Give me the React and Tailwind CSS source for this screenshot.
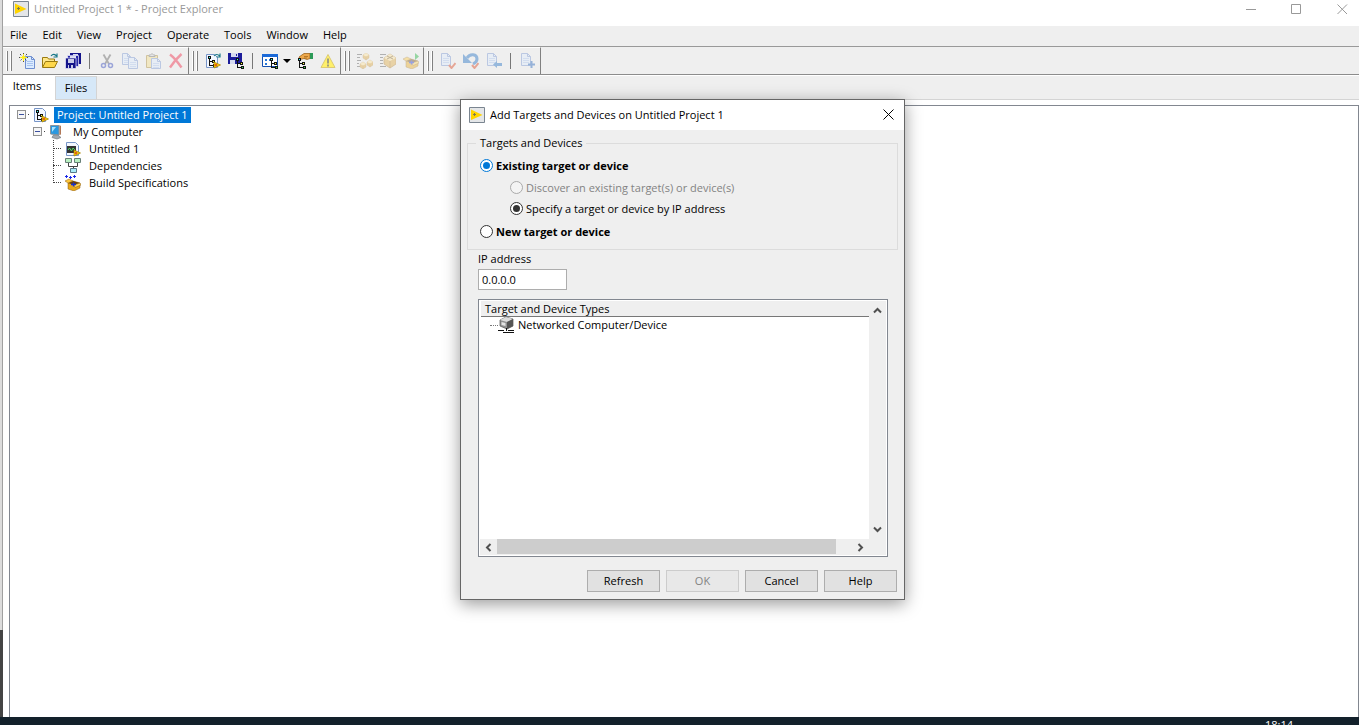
import { useState } from "react";

const menus = ["File", "Edit", "View", "Project", "Operate", "Tools", "Window", "Help"];

function Svg({ children, faded }) {
  return (
    <svg viewBox="0 0 16 16" className={`size-4 shrink-0 ${faded ? "opacity-40" : ""}`} fill="none" aria-hidden="true">
      {children}
    </svg>
  );
}

// shared icon parts
function Page({ x = 3, y = 2, w = 10, h = 13 }) {
  return (
    <g>
      <path d={`M${x + 0.5} ${y + 0.5}h${w - 4}l3 3v${h - 4}h-${w - 1}z`} fill="#dcecff" stroke="#6f8fd0" />
      <path d={`M${x + w - 3.5} ${y + 0.5}v3h3`} stroke="#6f8fd0" />
      <path d={`M${x + 2} ${y + 5.5}h${w - 4}M${x + 2} ${y + 7.5}h${w - 4}M${x + 2} ${y + 9.5}h${w - 4}`} stroke="#a9c4f0" />
    </g>
  );
}

function Nodes({ x = 0, y = 0 }) {
  return (
    <g transform={`translate(${x} ${y})`} shapeRendering="crispEdges">
      <path d="M0 0h3v3H0zM1 3h1v7H1zM2 5h2v1H2zM2 9h3v1H2zM4 4h3v3H4zM5 8h3v3H5z" fill="#111" />
      <path d="M1 1h1v1H1z" fill="#39f8e8" />
      <path d="M5 5h1v1H5z" fill="#ffff40" />
      <path d="M6 9h1v1H6z" fill="#35e050" />
    </g>
  );
}

function Arrow() {
  return (
    <g>
      <path d="M9 9l6.5 3L9 15z" fill="#ffe600" stroke="#a07800" strokeWidth="0.7" />
      <path d="M9.5 12h3M11 10.5v3" stroke="#d02020" strokeWidth="0.8" />
    </g>
  );
}

function Cube({ x, y, s = 1 }) {
  return (
    <g transform={`translate(${x} ${y}) scale(${s})`}>
      <path d="M0 2l3-2 3 2v3L3 7 0 5z" fill="#e0a83c" stroke="#a8741c" strokeWidth="0.4" />
      <path d="M0 2l3 1.5L6 2 3 0z" fill="#ffe39a" />
      <path d="M3 3.5V7" stroke="#a8741c" strokeWidth="0.4" />
    </g>
  );
}

function Box() {
  return (
    <g>
      <path d="M3 8l5-2 7 2v5l-6 3-6-2z" fill="#e8a818" stroke="#8a5a10" strokeWidth="0.5" />
      <path d="M3 8l5-2 7 2-6 2z" fill="#6a4208" />
      <path d="M0 6l4-2 4 2-5 2z" fill="#ffc838" stroke="#8a5a10" strokeWidth="0.5" />
      <path d="M9 10l6-2 1 2-6 2.5z" fill="#ffd75a" stroke="#8a5a10" strokeWidth="0.5" />
      <path d="M6 9.5h5M8.5 7.5v4" stroke="#1830d0" strokeWidth="1.4" />
    </g>
  );
}

function LabViewIcon() {
  return (
    <svg viewBox="0 0 16 16" className="size-4 shrink-0" aria-hidden="true">
      <path d="M.5.5h15v15H.5z" fill="#e4e6e8" stroke="#7a8590" />
      <path d="M2 2.5L13.500 8 2 13z" fill="#ffd500" />
      <path d="M4 7.5h3M5.5 6v3" stroke="#7d7a50" />
    </svg>
  );
}

function NewIcon() {
  return (
    <Svg>
      <Page x={6} y={3} w={10} h={13} />
      <path d="M4.5 0v9M0 4.5h9M1 1l7 7M8 1L1 8" stroke="#222" strokeWidth="0.8" strokeDasharray="1.5 1" />
      <path d="M3 3h3v3H3zM4 1h1v2H4zM4 6h1v2H4zM1 4h2v1H1zM6 4h2v1H6z" fill="#ffee20" />
    </Svg>
  );
}

function OpenIcon() {
  return (
    <Svg>
      <path d="M.5 14V4.5h5l1 1.500h6v3" fill="#ffe88a" stroke="#9a7a10" />
      <path d="M.5 14.5l3-6h12l-3 6z" fill="#ffd84c" stroke="#9a7a10" />
      <path d="M9 3c2-2.500 4-2 5.500 0M15 .5V4h-3.500" stroke="#187888" strokeWidth="1.2" />
    </Svg>
  );
}

function SaveAllIcon() {
  return (
    <Svg>
      <path d="M5 0h11v11H5z" fill="#14148a" />
      <path d="M8 1h5v3H8z" fill="#d8dcf0" />
      <path d="M2.500 2.500h11v11h-11z" fill="#2626a8" stroke="#eef" strokeWidth="0.7" />
      <path d="M5 3h6v3H5z" fill="#d8dcf0" />
      <path d="M.5 5H11v10.500H.5z" fill="#14148a" stroke="#eef" strokeWidth="0.7" />
      <path d="M3 6h6v4H3zM3 12h5v3H3z" fill="#c9cce8" />
      <path d="M4 12h2v3H4z" fill="#14148a" />
    </Svg>
  );
}

function CutIcon() {
  return (
    <Svg faded>
      <path d="M4.5 1.5L10 11M11.5 1.5L6 11" stroke="#555" strokeWidth="1.8" />
      <circle cx="4.5" cy="12.5" r="2" stroke="#2038b8" strokeWidth="1.5" />
      <circle cx="11.5" cy="12.5" r="2" stroke="#2038b8" strokeWidth="1.5" />
    </Svg>
  );
}

function CopyIcon() {
  return (
    <Svg faded>
      <Page x={0} y={0} w={9} h={12} />
      <Page x={6} y={4} w={10} h={12} />
    </Svg>
  );
}

function PasteIcon() {
  return (
    <Svg faded>
      <path d="M1.5 2.5h11v12h-11z" fill="#f5dc80" stroke="#a58428" />
      <path d="M4 3.5V2h1.5L7 .5 8.5 2H10v1.5z" fill="#ddd" stroke="#666" />
      <Page x={6} y={5} w={10} h={11} />
    </Svg>
  );
}

function DeleteIcon() {
  return (
    <Svg faded>
      <path d="M2 1.5c4 3 8 8 11.500 13M13.500 1C9 5 5 10 2 14.500" stroke="#f01838" strokeWidth="2.4" />
    </Svg>
  );
}

function ProjectIcon({ swoosh }) {
  return (
    <Svg>
      <path d="M1.5 1.5h8l3 3v10h-11z" fill="#f3f7ff" stroke="#7896c8" />
      <Nodes x={3} y={3} />
      <Arrow />
      {swoosh && <path d="M9 3c1.500-2 4-2 5.500 0M15 .5V4h-3.500" stroke="#187888" strokeWidth="1.2" />}
    </Svg>
  );
}

function SaveProjectIcon() {
  return (
    <Svg>
      <path d="M0 0h14v11H0z" fill="#1c1c9a" />
      <path d="M3 0h7v4H3zM2 7h5v4H2z" fill="#d6daf0" />
      <path d="M8 1h1v2H8z" fill="#1c1c9a" />
      <Nodes x={8} y={5} />
    </Svg>
  );
}

function ViewIcon() {
  return (
    <Svg>
      <path d="M.5 1.5h15v12H.5z" fill="#fff" stroke="#1450b0" />
      <path d="M0 1h16v3H0z" fill="#1c6ad8" />
      <path d="M3 6h2v2H3zM7 6h2v2H7zM3 10h2v2H3z" fill="#2878d8" />
      <Nodes x={8} y={5} />
    </Svg>
  );
}

function PropertiesIcon() {
  return (
    <Svg>
      <path d="M2 4l5-3.500h6v5l-3 1-3-1-4 1z" fill="#eda84c" stroke="#94580c" strokeWidth="0.7" />
      <path d="M7 3.500h4M7 5h3" stroke="#94580c" strokeWidth="0.6" />
      <path d="M13 0h3v6h-3z" fill="#2c9a58" />
      <Nodes x={1} y={5} />
    </Svg>
  );
}

function WarningIcon() {
  return (
    <Svg>
      <path d="M8 1.5l7 13H1z" fill="#fff06a" stroke="#dccb74" strokeLinejoin="round" />
      <path d="M8 5.5v5M8 11.5v2" stroke="#8a8a86" strokeWidth="1.6" />
    </Svg>
  );
}

function CubesIcon() {
  return (
    <Svg faded>
      <path d="M0 1.5h5M0 4.5h3M0 7.5h4M0 10.5h2M0 13.5h3" stroke="#555" />
      <Cube x={6} y={0} />
      <Cube x={3} y={9} />
      <Cube x={10} y={7} />
    </Svg>
  );
}

function BigCubeIcon() {
  return (
    <Svg faded>
      <path d="M0 1.5h6M0 4.5h3M0 7.5h3M0 10.5h3M0 13.5h6" stroke="#555" />
      <Cube x={4} y={1} s={2} />
      <path d="M7 3l6 3M13 3L7 6" stroke="#7a5818" />
    </Svg>
  );
}

function BuildIcon() {
  return (
    <Svg faded>
      <Box />
      <path d="M12 0l4 3.500L12 7z" fill="#10b030" />
    </Svg>
  );
}

function CheckPageIcon() {
  return (
    <Svg faded>
      <Page x={1} y={0} w={10} h={13} />
      <path d="M9 12l2.500 3L15.500 10" stroke="#d83810" strokeWidth="2" />
    </Svg>
  );
}

function UndoIcon() {
  return (
    <Svg faded>
      <path d="M4 5c3-5 10-4 10 1 0 3-2 4-4 5" stroke="#1468c0" strokeWidth="3" />
      <path d="M0 1v9h9z" fill="#1468c0" />
      <path d="M9 12l2.500 3L15.500 10" stroke="#d83810" strokeWidth="2" />
    </Svg>
  );
}

function PageBackIcon() {
  return (
    <Svg faded>
      <Page x={1} y={0} w={10} h={13} />
      <path d="M7 11.5L11 8v2h5v3h-5v2z" fill="#1468c0" />
    </Svg>
  );
}

function PageAddIcon() {
  return (
    <Svg faded>
      <Page x={1} y={0} w={10} h={13} />
      <path d="M8 11.5h7M11.5 8v7" stroke="#1458b8" strokeWidth="2" />
    </Svg>
  );
}

function ComputerIcon() {
  return (
    <Svg>
      <path d="M1.500 1.500h8.500v9.500l-8.500-1z" fill="#2a98e0" stroke="#8a949c" />
      <path d="M3 3h4L3 8z" fill="#a8e4ff" />
      <path d="M10.500 1L12 2v8.500l-1.500.5z" fill="#b07858" />
      <path d="M4 11.500l5-.5 3 2.500-4 1.500-5-1.500z" fill="#a0a8b0" stroke="#687078" strokeWidth="0.6" />
    </Svg>
  );
}

function ViIcon() {
  return (
    <Svg>
      <path d="M1.5 1.500h9l3 3v10h-12z" fill="#f3f7ff" stroke="#7896c8" />
      <path d="M2 5h9v7H2z" fill="#333" />
      <path d="M3 9l1.500-2 2 3 1.500-3 2 2" stroke="#50d860" />
      <Arrow />
    </Svg>
  );
}

function DependenciesIcon() {
  return (
    <Svg>
      <path d="M3.5 5v3.500h9V5M8.5 8v3" stroke="#444" />
      <path d="M.5.5h6v4h-6zM9.500.5h6v4h-6z" fill="#b8f0c0" stroke="#688078" />
      <path d="M5.5 10.5h6v4h-6z" fill="#a8ecf8" stroke="#587888" />
    </Svg>
  );
}

function BuildSpecIcon() {
  return (
    <Svg>
      <Box />
      <path d="M0 1.500h3M4 2.500h3M8 1.500h3M1.5 0v3M5.5 1v3M9.500 0v3" stroke="#1828e8" />
    </Svg>
  );
}

function NetworkIcon() {
  return (
    <Svg>
      <path d="M2 3l6-3 7 2v7l-6 3-7-3z" fill="#909090" stroke="#555" strokeWidth="0.7" />
      <path d="M2 3l7 2 6-3-7-2z" fill="#ddd" />
      <path d="M9 5l6-3v7l-6 3z" fill="#555" />
      <path d="M3.500 5l4 1v3l-4-1z" fill="#e4e4e4" />
      <path d="M8.500 11v3M0 13.500h6M10 13.500h6M5 15.500h11" stroke="#111" />
    </Svg>
  );
}

const toolbars = [
  [
    ["New", NewIcon], ["Open", OpenIcon], ["Save All", SaveAllIcon], "sep",
    ["Cut", CutIcon], ["Copy", CopyIcon], ["Paste", PasteIcon], ["Delete", DeleteIcon],
  ],
  [
    ["Open Project", () => <ProjectIcon swoosh />], ["Save Project", SaveProjectIcon], "sep",
    ["Show", ViewIcon], "drop", ["Properties", PropertiesIcon], ["Conflicts", WarningIcon],
  ],
  [["Build", CubesIcon], ["Build All", BigCubeIcon], ["Deploy", BuildIcon]],
  [
    ["Check", CheckPageIcon], ["Undo Check", UndoIcon], ["Get Latest", PageBackIcon], "sep",
    ["Add File", PageAddIcon],
  ],
];

function ToolItem({ item }) {
  if (item === "sep") {
    return (
      <span className="flex w-[11px] justify-center">
        <span className="h-4 w-px bg-[#777]" />
      </span>
    );
  }
  if (item === "drop") {
    return (
      <button aria-label="Show options" className="flex w-3 items-center justify-center">
        <svg viewBox="0 0 8 4" className="h-1 w-2"><path d="M0 0h8L4 4z" /></svg>
      </button>
    );
  }
  const [label, Icon] = item;
  return (
    <button aria-label={label} className="flex h-[23px] w-[23px] items-center justify-center">
      <Icon />
    </button>
  );
}

function Toolbar() {
  return (
    <div className="flex h-7 border-b border-[#8c8c8c] bg-[#efefef]">
      {toolbars.map((items, i) => (
        <div key={i} className="flex items-center border-t border-r border-t-white border-r-[#808080] pr-px">
          <span className="flex w-3 justify-center gap-0.5">
            <span className="h-5 w-0.5 border-r border-[#808080] bg-white" />
            <span className="h-5 w-0.5 border-r border-[#808080] bg-white" />
          </span>
          {items.map((item, j) => <ToolItem key={j} item={item} />)}
        </div>
      ))}
    </div>
  );
}

function Expander() {
  return (
    <button aria-label="Collapse" className="flex size-[9px] shrink-0 items-center justify-center border border-[#919191] bg-[#f6f6f6]">
      <span className="h-px w-[5px] bg-[#3c50a0]" />
    </button>
  );
}

function Leaf({ icon, children }) {
  return (
    <li className="flex h-[17px] items-center">
      <span className="mr-1 w-2 border-t border-dotted border-[#444]" />
      {icon}
      <span className="ml-2">{children}</span>
    </li>
  );
}

function ProjectTree() {
  return (
    <ul className="pl-[7px]">
      <li>
        <div className="flex h-[17px] items-center">
          <Expander />
          <span className="mr-1 ml-0.5 w-px border-t border-dotted border-[#444]" />
          <ProjectIcon />
          <span className="ml-[5px] bg-[#0078d7] px-[3px] leading-[16px] text-white">Project: Untitled Project 1</span>
        </div>
        <ul className="pl-4">
          <li>
            <div className="flex h-[17px] items-center">
              <Expander />
              <span className="mr-1 ml-0.5 w-px border-t border-dotted border-[#444]" />
              <ComputerIcon />
              <span className="ml-2">My Computer</span>
            </div>
            <ul className="relative pl-5 before:absolute before:top-0 before:bottom-2 before:left-5 before:border-l before:border-dotted before:border-[#444]">
              <Leaf icon={<ViIcon />}>Untitled 1</Leaf>
              <Leaf icon={<DependenciesIcon />}>Dependencies</Leaf>
              <Leaf icon={<BuildSpecIcon />}>Build Specifications</Leaf>
            </ul>
          </li>
        </ul>
      </li>
    </ul>
  );
}

const radioClass =
  "flex size-[13px] shrink-0 appearance-none items-center justify-center rounded-full border border-[#333] bg-white checked:before:size-[7px] checked:before:rounded-full checked:before:bg-[#333] disabled:border-[#aaa] disabled:bg-[#f4f4f4]";
const blueRadioClass =
  "flex size-[13px] shrink-0 appearance-none items-center justify-center rounded-full border border-[#333] bg-white checked:border-[#0078d7] checked:before:size-[7px] checked:before:rounded-full checked:before:bg-[#0078d7]";

function Chevron({ d }) {
  return (
    <svg viewBox="0 0 9 9" className="size-[9px]" fill="none" stroke="#505050" strokeWidth="2" aria-hidden="true">
      <path d={d} />
    </svg>
  );
}

function DialogButton({ children, disabled }) {
  return (
    <button
      disabled={disabled}
      className="h-[22px] w-[73px] border border-[#adadad] bg-[#e1e1e1] disabled:border-[#ccc] disabled:bg-[#e8e8e8] disabled:text-[#838383]"
    >
      {children}
    </button>
  );
}

function TargetsDialog() {
  const [target, setTarget] = useState("existing");
  const [mode, setMode] = useState("specify");
  const [ip, setIp] = useState("0.0.0.0");

  return (
    <div
      role="dialog"
      aria-labelledby="dialog-title"
      className="absolute top-[99px] left-[460px] w-[445px] border border-[#666] bg-[#efefef] shadow-[0_4px_16px_rgba(0,0,0,0.4)]"
    >
      <header className="flex h-[30px] items-center bg-white px-2">
        <LabViewIcon />
        <h2 id="dialog-title" className="ml-[5px] flex-1">Add Targets and Devices on Untitled Project 1</h2>
        <button aria-label="Close" className="size-[13px] pr-0.5 pb-0.5">
          <svg viewBox="0 0 11 11" className="size-[11px]" stroke="#000"><path d="M.5.5l10 10M10.500.5l-10 10" /></svg>
        </button>
      </header>

      <div className="px-1.5 pt-1.5 pb-[7px]">
        <fieldset className="flex h-[114px] flex-col border border-[#dcdcdc] pt-1 pl-3">
          <legend className="-ml-1 px-1 leading-[14px]">Targets and Devices</legend>
          <label className="flex h-[23px] items-center gap-[3px] font-bold">
            <input type="radio" name="target" className={blueRadioClass} checked={target === "existing"} onChange={() => setTarget("existing")} />
            Existing target or device
          </label>
          <label className="ml-[30px] flex h-[21px] items-center gap-[3px] text-[#838383]">
            <input type="radio" name="mode" disabled className={radioClass} checked={mode === "discover"} onChange={() => setMode("discover")} />
            Discover an existing target(s) or device(s)
          </label>
          <label className="ml-[30px] flex h-[21px] items-center gap-[3px]">
            <input type="radio" name="mode" className={radioClass} checked={mode === "specify"} onChange={() => setMode("specify")} />
            Specify a target or device by IP address
          </label>
          <label className="flex h-[25px] items-center gap-[3px] font-bold">
            <input type="radio" name="target" className={blueRadioClass} checked={target === "new"} onChange={() => setTarget("new")} />
            New target or device
          </label>
        </fieldset>

        <div className="px-[11px]">
          <label htmlFor="ip" className="block h-[19px] leading-[18px]">IP address</label>
          <input
            id="ip"
            type="text"
            value={ip}
            onChange={(e) => setIp(e.target.value)}
            className="block h-[21px] w-[89px] border border-[#adadad] bg-white px-[3px] outline-none"
          />
        </div>

        <div className="mt-[9px] mr-2.5 ml-[11px] border border-[#828790] bg-white p-px">
          <div className="flex h-[238px]">
            <div className="flex-1 pl-px">
              <h3 className="h-4 border-b border-[#777] bg-[#efefef] pl-1 leading-[15px]">Target and Device Types</h3>
              <ul className="pl-[9px]">
                <li className="flex h-4 items-center">
                  <span className="w-2 border-t border-dotted border-[#777]" />
                  <NetworkIcon />
                  <span className="ml-1">Networked Computer/Device</span>
                </li>
              </ul>
            </div>
            <div className="flex w-[17px] flex-col items-center justify-between bg-[#efefef] py-[5px]">
              <Chevron d="M1 6.500L4.500 3 8 6.500" />
              <Chevron d="M1 2.500L4.500 6 8 2.500" />
            </div>
          </div>
          <div className="flex h-4 bg-[#efefef] pr-[21px]">
            <span className="flex w-[17px] items-center justify-center"><Chevron d="M6.500 1L3 4.500 6.500 8" /></span>
            <span className="h-[15px] flex-1 bg-[#cdcdcd]" />
            <span className="flex w-[29px] items-center justify-end"><Chevron d="M2.500 1L6 4.500 2.500 8" /></span>
          </div>
        </div>

        <div className="mt-[13px] flex justify-end gap-1.5 pr-px">
          <DialogButton>Refresh</DialogButton>
          <DialogButton disabled>OK</DialogButton>
          <DialogButton>Cancel</DialogButton>
          <DialogButton>Help</DialogButton>
        </div>
      </div>
    </div>
  );
}

function App() {
  return (
    <div className="relative flex h-screen flex-col overflow-hidden bg-white font-['Open_Sans','Noto_Sans',sans-serif] text-[11px] leading-[16px] text-black">
      <div className="flex min-h-0 flex-1">
        <div className="flex w-[3px] shrink-0 flex-col">
          <div className="flex-1 border-r border-[#a0a0a0] bg-[#dcdcdc]" />
          <div className="h-[87px] bg-[#444]" />
        </div>

        <main className="flex min-w-0 flex-1 flex-col">
          <header className="flex h-[26px] items-start pr-[11px] pl-2.5">
            <div className="flex flex-1 items-center gap-[5px] pt-px text-[#999]">
              <LabViewIcon />
              <h1>Untitled Project 1 * - Project Explorer</h1>
            </div>
            <div className="flex gap-[35px] pt-1">
              <button aria-label="Minimize">
                <svg viewBox="0 0 11 11" className="size-[11px]" stroke="#999"><path d="M1 5.500h10" /></svg>
              </button>
              <button aria-label="Maximize">
                <svg viewBox="0 0 11 11" className="size-[11px]" fill="none" stroke="#999"><path d="M.5.5h9v9h-9z" /></svg>
              </button>
              <button aria-label="Close">
                <svg viewBox="0 0 11 11" className="size-[11px]" stroke="#999"><path d="M.5.5l9.500 9.500M10 .5L.5 10" /></svg>
              </button>
            </div>
          </header>

          <nav className="flex h-[21px] items-center gap-[15px] border-b border-[#999] bg-[#efefef] pb-0.5 pl-[7px]">
            {menus.map((name) => <button key={name}>{name}</button>)}
          </nav>

          <Toolbar />

          <div role="tablist" className="flex h-[25px] border-t border-b border-t-white border-b-[#d4d4d4] bg-[#efefef]">
            <button role="tab" aria-selected="true" className="-mb-px w-[52px] bg-white pr-1 pb-1">Items</button>
            <button role="tab" aria-selected="false" className="w-[42px] border-x border-t border-[#d4d4d4] bg-[#d6e8f8]">Files</button>
          </div>

          <div className="mt-[5px] ml-1.5 min-h-0 flex-1 border-t border-r border-l border-[#828790] bg-white">
            <ProjectTree />
          </div>
        </main>
      </div>

      <footer className="flex h-2 shrink-0 justify-end overflow-hidden bg-[#13212b] pr-[66px] text-white">
        <time>18:14</time>
      </footer>

      <TargetsDialog />
    </div>
  );
}

export default App;
